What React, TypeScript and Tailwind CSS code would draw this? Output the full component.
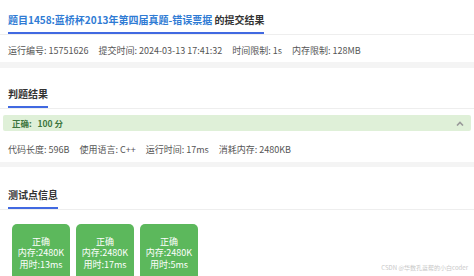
import React from 'react';

const font = { fontFamily: '"Noto Sans CJK SC", "Noto Sans", sans-serif' };

const SectionTitle: React.FC<{ children: React.ReactNode; className?: string }> = ({ children, className }) => (
  <div className={`border-b border-[#eeeeee] pl-[8px] ${className || ''}`}>
    <span className="inline-block border-b-2 border-[#4169e1] pb-[5px] text-[10px] font-bold leading-[14px] text-[#333]">
      {children}
    </span>
  </div>
);

const cases = [
  { mem: '2480K', time: '13ms' },
  { mem: '2480K', time: '17ms' },
  { mem: '2480K', time: '5ms' },
];

export default function App() {
  return (
    <div className="relative h-[276px] w-[474px] overflow-hidden bg-[#f4f4f4]" style={font}>
      {/* card 1: title + submit info */}
      <div className="bg-white pb-[5px]">
        <SectionTitle className="pt-[5px]">
          <span className="text-[#2f7bd4]">题目1458:蓝桥杯2013年第四届真题-错误票据</span>
          <span> 的提交结果</span>
        </SectionTitle>
        <div className="flex gap-[10px] pl-[8px] pt-[9px] text-[9px] leading-[13px] text-[#555]">
          <span>运行编号: 15751626</span>
          <span>提交时间: 2024-03-13 17:41:32</span>
          <span>时间限制: 1s</span>
          <span>内存限制: 128MB</span>
        </div>
      </div>

      {/* card 2: judge result */}
      <div className="mt-[6px] bg-white pb-[6px]">
        <SectionTitle className="pt-[11px]">判题结果</SectionTitle>
        <div className="mx-[3px] mt-[6px] flex h-[16px] items-center justify-between rounded-[2px] bg-[#dff0d8] pl-[9px] pr-[7px]">
          <span className="text-[8.5px] font-bold text-[#3c763d]">正确:&nbsp;&nbsp; 100 分</span>
          <svg width="8" height="5" viewBox="0 0 8 5" className="text-[#999]">
            <path d="M1 4.5 L4 1.5 L7 4.5" fill="none" stroke="currentColor" strokeWidth="1.6" />
          </svg>
        </div>
        <div className="flex gap-[10px] pl-[8px] pt-[12px] text-[9px] leading-[13px] text-[#555]">
          <span>代码长度: 596B</span>
          <span>使用语言: C++</span>
          <span>运行时间: 17ms</span>
          <span>消耗内存: 2480KB</span>
        </div>
      </div>

      {/* card 3: test points */}
      <div className="mt-[5px] h-full bg-white">
        <SectionTitle className="pt-[13px]">测试点信息</SectionTitle>
        <div className="flex gap-[6px] pl-[12px] pt-[14px]">
          {cases.map((c, i) => (
            <div
              key={i}
              className="flex h-[58px] w-[58px] flex-col items-center justify-center rounded-[5px] bg-[#5cb85c] text-[9px] leading-[11.5px] text-white"
            >
              <span>正确</span>
              <span>内存:{c.mem}</span>
              <span>用时:{c.time}</span>
            </div>
          ))}
        </div>
      </div>

      <div className="absolute bottom-[4px] right-[6px] text-[6px] leading-[8px] text-[#c8c8c8]">
        CSDN @华数孔蓝帮的小白coder
      </div>
    </div>
  );
}
